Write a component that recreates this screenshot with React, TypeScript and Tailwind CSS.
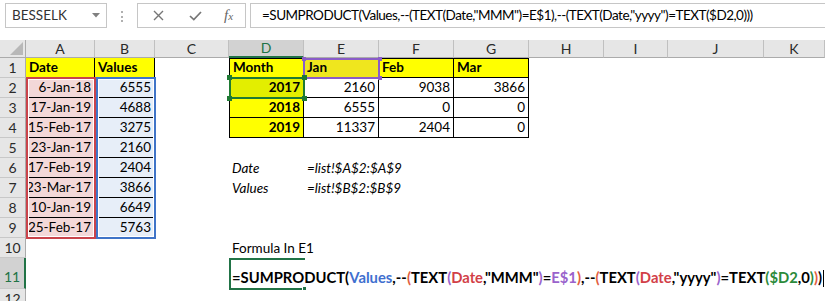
import React from "react";

type CellSpec = {
  t?: React.ReactNode;
  r?: boolean;
  b?: boolean;
  i?: boolean;
  bg?: string;
  bd?: string;
  z?: boolean;
};

const COLS = ["A", "B", "C", "D", "E", "F", "G", "H", "I", "J", "K"];

const Y = "bg-[#ffff00]";
const PK = "bg-[#f3d8d8]";
const BL = "bg-[#e7eef8]";

const K = "#000000";
const BLU = "#3f6fcf";
const RED = "#d23f48";
const PUR = "#9a63cc";
const GRN = "#2b8a3a";
const ORG = "#e2603f";

const seg: [string, string][] = [
  ["=SUMPRODUCT(", K],
  ["Values", BLU],
  [",--", K],
  ["(", ORG],
  ["TEXT", K],
  ["(", PUR],
  ["Date", RED],
  [',"MMM"', K],
  [")", PUR],
  ["=", K],
  ["E$1", PUR],
  [")", ORG],
  [",--", K],
  ["(", ORG],
  ["TEXT", K],
  ["(", PUR],
  ["Date", RED],
  [',"yyyy"', K],
  [")", PUR],
  ["=TEXT", K],
  ["(", GRN],
  ["$D2", GRN],
  [",0", K],
  [")", GRN],
  [")", ORG],
  [")", K],
];

const Formula = () => (
  <span className="font-bold text-[14.8px] whitespace-nowrap">
    {seg.map(([s, c], i) => (
      <span key={i} style={{ color: c }}>
        {s}
      </span>
    ))}
    <span className="inline-block w-[1px] h-[17px] bg-black align-[-4px] ml-[1px]" />
  </span>
);

const AB = "border-r border-b border-black";
const TB = "border-r border-b border-black";
const TBL = "border-l border-r border-b border-black";
const TBT = "border-t border-r border-b border-black";
const TBTL = "border-t border-l border-r border-b border-black";

const rows: Record<number, Record<string, CellSpec>> = {
  1: {
    A: { t: "Date", b: true, bg: Y, bd: AB },
    B: { t: "Values", b: true, bg: Y, bd: AB },
    D: { t: "Month", b: true, bg: Y, bd: TBTL },
    E: { t: "Jan", b: true, bg: "bg-[#efe61e]", bd: TBT },
    F: { t: "Feb", b: true, bg: Y, bd: TBT },
    G: { t: "Mar", b: true, bg: Y, bd: TBT },
  },
  2: {
    A: { t: "6-Jan-18", r: true, bg: PK, bd: AB },
    B: { t: "6555", r: true, bg: BL, bd: AB },
    D: { t: "2017", r: true, b: true, bg: "bg-[#e3ee00]", bd: TBL },
    E: { t: "2160", r: true, bd: TB },
    F: { t: "9038", r: true, bd: TB },
    G: { t: "3866", r: true, bd: TB },
  },
  3: {
    A: { t: "17-Jan-19", r: true, bg: PK, bd: AB },
    B: { t: "4688", r: true, bg: BL, bd: AB },
    D: { t: "2018", r: true, b: true, bg: Y, bd: TBL },
    E: { t: "6555", r: true, bd: TB },
    F: { t: "0", r: true, bd: TB },
    G: { t: "0", r: true, bd: TB },
  },
  4: {
    A: { t: "15-Feb-17", r: true, bg: PK, bd: AB },
    B: { t: "3275", r: true, bg: BL, bd: AB },
    D: { t: "2019", r: true, b: true, bg: Y, bd: TBL },
    E: { t: "11337", r: true, bd: TB },
    F: { t: "2404", r: true, bd: TB },
    G: { t: "0", r: true, bd: TB },
  },
  5: {
    A: { t: "23-Jan-17", r: true, bg: PK, bd: AB },
    B: { t: "2160", r: true, bg: BL, bd: AB },
  },
  6: {
    A: { t: "17-Feb-19", r: true, bg: PK, bd: AB },
    B: { t: "2404", r: true, bg: BL, bd: AB },
    D: { t: "Date", i: true },
    E: { t: "=list!$A$2:$A$9", i: true, z: true },
  },
  7: {
    A: { t: "23-Mar-17", r: true, bg: PK, bd: AB },
    B: { t: "3866", r: true, bg: BL, bd: AB },
    D: { t: "Values", i: true },
    E: { t: "=list!$B$2:$B$9", i: true, z: true },
  },
  8: {
    A: { t: "10-Jan-19", r: true, bg: PK, bd: AB },
    B: { t: "6649", r: true, bg: BL, bd: AB },
  },
  9: {
    A: { t: "25-Feb-17", r: true, bg: PK, bd: AB },
    B: { t: "5763", r: true, bg: BL, bd: AB },
  },
  10: {
    D: { t: "Formula In E1", z: true },
  },
  11: {
    D: { t: <Formula />, z: true },
  },
};

function Cell({ s, tall }: { s?: CellSpec; tall?: boolean }) {
  if (!s) return <div />;
  return (
    <div
      className={[
        "flex items-end whitespace-nowrap",
        tall ? "pb-[2px]" : "pb-[1px]",
        s.r ? "justify-end pr-[3px]" : "justify-start pl-[3px]",
        s.b ? "font-bold" : "",
        s.i ? "italic" : "",
        s.bg ?? "",
        s.bd ?? "",
        s.z ? "relative z-10 overflow-visible" : "overflow-hidden",
      ].join(" ")}
    >
      <span className="leading-[18px]">{s.t}</span>
    </div>
  );
}

function FormulaBar() {
  return (
    <div className="h-[40px] bg-white flex items-start pt-[3px]">
      <div className="ml-[5px] w-[102px] h-[25px] border border-[#c6c6c6] flex items-center justify-between pl-[6px] pr-[6px]">
        <span className="text-[13.5px] text-[#333]">BESSELK</span>
        <svg width="8" height="5" viewBox="0 0 8 5">
          <path d="M0 0 L8 0 L4 4.5 Z" fill="#808080" />
        </svg>
      </div>
      <div className="w-[30px] flex flex-col items-center gap-[2.5px] pt-[8px]">
        <span className="w-[2px] h-[2px] bg-[#b0b0b0]" />
        <span className="w-[2px] h-[2px] bg-[#b0b0b0]" />
        <span className="w-[2px] h-[2px] bg-[#b0b0b0]" />
      </div>
      <div className="w-[109px] h-[25px] border border-[#c6c6c6] flex items-center">
        <div className="w-[40px] flex justify-center">
          <svg width="11" height="11" viewBox="0 0 11 11">
            <path d="M1 1 L10 10 M10 1 L1 10" stroke="#767676" strokeWidth="1.4" />
          </svg>
        </div>
        <div className="w-[34px] flex justify-center">
          <svg width="13" height="10" viewBox="0 0 13 10">
            <path d="M1 5 L4.8 8.6 L12 1" stroke="#767676" strokeWidth="1.7" fill="none" />
          </svg>
        </div>
        <div className="w-[33px] flex justify-center">
          <span className="font-['Liberation_Serif',serif] italic text-[#666] leading-none">
            <span className="text-[15px]">f</span>
            <span className="text-[11px]">x</span>
          </span>
        </div>
      </div>
      <div className="ml-[4px] flex-1 h-[25px] border border-r-0 border-[#c6c6c6] flex items-center pl-[11px] overflow-hidden">
        <span className="text-[13.5px] tracking-[-0.5px] text-black whitespace-nowrap">
          =SUMPRODUCT(Values,--(TEXT(Date,"MMM")=E$1),--(TEXT(Date,"yyyy")=TEXT($D2,0)))
        </span>
      </div>
    </div>
  );
}

export default function App() {
  const rowNums = [1, 2, 3, 4, 5, 6, 7, 8, 9, 10, 11, 12];
  return (
    <div className="w-[825px] h-[301px] overflow-hidden bg-white font-['Lato',sans-serif] text-[13.5px] text-black">
      <FormulaBar />
      <div className="relative grid grid-cols-[26px_69px_60px_74px_75px_75px_75px_75px_75px_64px_96px_61px] grid-rows-[18px_repeat(10,20px)_31px_20px]">
        <div className="bg-[#e6e6e6] border-r border-b border-[#ababab] flex items-end justify-end pr-[2px] pb-[2px]">
          <svg width="13" height="13" viewBox="0 0 13 13">
            <path d="M13 0 L13 13 L0 13 Z" fill="#b8b8b8" />
          </svg>
        </div>
        {COLS.map((c) =>
          c === "D" ? (
            <div
              key={c}
              className="bg-[#d2d2d2] border-b-2 border-b-[#217346] border-r border-r-[#c0c0c0] flex items-center justify-center text-[14px] text-[#217346] leading-none"
            >
              {c}
            </div>
          ) : (
            <div
              key={c}
              className="bg-[#e6e6e6] border-b border-b-[#ababab] border-r border-r-[#c0c0c0] flex items-center justify-center text-[14px] text-[#2a2a2a] leading-none"
            >
              {c}
            </div>
          )
        )}
        {rowNums.map((r) => (
          <React.Fragment key={r}>
            {r === 11 ? (
              <div className="bg-[#d2d2d2] border-r-2 border-r-[#217346] border-b border-b-[#c8c8c8] flex items-end justify-center pb-[2px] text-[14px] text-[#217346] leading-[18px]">
                {r}
              </div>
            ) : (
              <div className="bg-[#e6e6e6] border-r border-r-[#ababab] border-b border-b-[#c8c8c8] flex items-center justify-center text-[14px] text-[#2a2a2a] leading-none">
                {r}
              </div>
            )}
            {COLS.map((c) => (
              <Cell key={c} s={rows[r]?.[c]} tall={r === 11} />
            ))}
          </React.Fragment>
        ))}

        {/* Date range highlight */}
        <div className="absolute left-[26px] top-[37px] w-[70px] h-[162px] border-2 border-[#c9444b] z-20 pointer-events-none">
          <div className="absolute inset-0 border border-white" />
        </div>
        {/* Values range highlight */}
        <div className="absolute left-[96px] top-[37px] w-[60px] h-[162px] border-2 border-[#3f74c8] z-20 pointer-events-none">
          <div className="absolute inset-0 border border-white" />
        </div>

        {/* E$1 highlight */}
        <div className="absolute left-[303px] top-[18px] w-[77px] h-[21px] border-2 border-[#8a5cc8] z-20" />
        <div className="absolute left-[302px] top-[17px] w-[4px] h-[4px] bg-[#8a5cc8] z-30" />
        <div className="absolute left-[378px] top-[17px] w-[4px] h-[4px] bg-[#8a5cc8] z-30" />
        <div className="absolute left-[302px] top-[36px] w-[4px] h-[4px] bg-[#8a5cc8] z-30" />
        <div className="absolute left-[378px] top-[36px] w-[4px] h-[4px] bg-[#8a5cc8] z-30" />

        {/* $D2 highlight */}
        <div className="absolute left-[229px] top-[37px] w-[76px] h-[22px] border-2 border-[#1f7a34] z-20" />
        <div className="absolute left-[227px] top-[35px] w-[5px] h-[5px] bg-[#1f7a34] z-30" />
        <div className="absolute left-[302px] top-[35px] w-[5px] h-[5px] bg-[#1f7a34] z-30" />
        <div className="absolute left-[227px] top-[56px] w-[5px] h-[5px] bg-[#1f7a34] z-30" />
        <div className="absolute left-[302px] top-[56px] w-[5px] h-[5px] bg-[#1f7a34] z-30" />

        {/* Active cell D11 */}
        <div className="absolute left-[229px] top-[218px] w-[76px] h-[2px] bg-[#217346] z-20" />
        <div className="absolute left-[229px] top-[218px] w-[2px] h-[32px] bg-[#217346] z-20" />
        <div className="absolute left-[229px] top-[248px] w-[76px] h-[2px] bg-[#217346] z-20" />
        <div className="absolute left-[302px] top-[246px] w-[5px] h-[5px] bg-[#217346] border border-white z-30" />
      </div>
    </div>
  );
}
